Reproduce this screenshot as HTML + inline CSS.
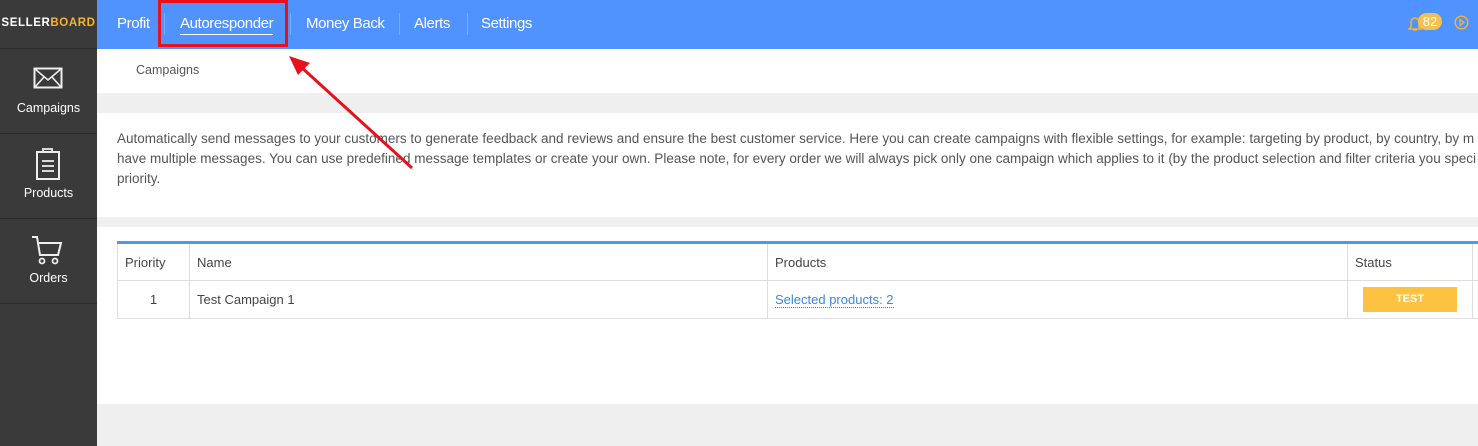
<!DOCTYPE html>
<html><head><style>
*{margin:0;padding:0;box-sizing:border-box}
body{width:1478px;height:446px;overflow:hidden;position:relative;background:#efefef;font-family:"Liberation Sans",sans-serif;}
.side{position:absolute;left:0;top:0;width:97px;height:446px;background:#3a3a3a;}
.logo{height:49px;line-height:47px;font-weight:bold;font-size:11.5px;color:#fff;text-align:center;letter-spacing:0.6px;border-bottom:1px solid #2c2c2c}
.logo b{color:#f5b52c}
.item{height:85px;border-bottom:1px solid #2c2c2c;color:#fff;font-size:12.5px;text-align:center;position:relative}
.item span{position:absolute;left:0;right:0;bottom:18px}
.item svg{position:absolute;left:33px;top:18px}
.top{position:absolute;left:97px;top:0;right:0;height:49px;background:#5093fe;color:#fff;font-size:15px}
.top a{position:absolute;top:15px;letter-spacing:-0.4px}
.sep{position:absolute;top:13px;width:1px;height:22px;background:#76abff}
.w{position:absolute;left:97px;right:0;background:#fff}
p{font-size:13.5px;color:#555;line-height:20px}
table{position:absolute;left:117px;top:241px;border-collapse:collapse;border-top:3px solid #5093fe;font-size:13px;color:#444;table-layout:fixed;width:1380px}
td{border:1px solid #ddd;padding:0 7px;height:38px}
</style></head><body>
<div class="side">
<div class="logo">SELLER<b>BOARD</b></div>
<div class="item"><svg width="30" height="22" viewBox="0 0 30 22"><rect x="1.5" y="1.5" width="27" height="19" fill="none" stroke="#eee" stroke-width="2"/><path d="M2 2L15 13L28 2M2 20L11 10M28 20L19 10" fill="none" stroke="#eee" stroke-width="1.6"/></svg><span>Campaigns</span></div>
<div class="item"><svg width="30" height="34" viewBox="0 0 30 34" style="left:35px;top:14px"><rect x="2" y="4" width="22" height="27" fill="none" stroke="#eee" stroke-width="2"/><path d="M8 4V1H17V4M7 13H19M7 18H19M7 23H19" fill="none" stroke="#eee" stroke-width="1.8"/></svg><span>Products</span></div>
<div class="item"><svg width="34" height="32" viewBox="0 0 34 32" style="left:31px;top:16px"><path d="M1 2H6L9 20H27L30 8H8" fill="none" stroke="#eee" stroke-width="2"/><circle cx="11" cy="26" r="2.5" fill="none" stroke="#eee" stroke-width="1.8"/><circle cx="24" cy="26" r="2.5" fill="none" stroke="#eee" stroke-width="1.8"/></svg><span>Orders</span></div>
</div>
<div class="top">
<a style="left:20px">Profit</a><div class="sep" style="left:67px"></div>
<a style="left:83px;border-bottom:1px solid #fff;padding-bottom:2px">Autoresponder</a><div class="sep" style="left:193px"></div>
<a style="left:209px">Money Back</a><div class="sep" style="left:302px"></div>
<a style="left:317px">Alerts</a><div class="sep" style="left:370px"></div>
<a style="left:384px">Settings</a>
<svg style="position:absolute;left:1311px;top:14px" width="14" height="18" viewBox="0 0 14 18"><path d="M3 13V8a4 4 0 0 1 8 0v5l2 2H1zM5 16h4" fill="none" stroke="#f5b52c" stroke-width="1.5"/></svg>
<div style="position:absolute;left:1321px;top:13px;width:24px;height:17px;border-radius:9px;background:#f5c14a;color:#fff;font-size:13px;text-align:center;line-height:17px">82</div>
<svg style="position:absolute;left:1357px;top:15px" width="15" height="15" viewBox="0 0 15 15"><circle cx="7.5" cy="7.5" r="6.3" fill="none" stroke="#f5b52c" stroke-width="1.4"/><path d="M6 4.5L10 7.5L6 10.5z" fill="none" stroke="#f5b52c" stroke-width="1.2"/></svg>
</div>
<div class="w" style="top:49px;height:44px"><div style="position:absolute;left:39px;top:14px;font-size:12.5px;color:#555">Campaigns</div></div>
<div class="w" style="top:113px;height:104px"><p style="position:absolute;left:20px;top:16px;width:1400px;white-space:nowrap">Automatically send messages to your customers to generate feedback and reviews and ensure the best customer service. Here you can create campaigns with flexible settings, for example: targeting by product, by country, by m<br>have multiple messages. You can use predefined message templates or create your own. Please note, for every order we will always pick only one campaign which applies to it (by the product selection and filter criteria you speci<br>priority.</p></div>
<div class="w" style="top:227px;height:177px"></div>
<table>
<colgroup><col style="width:72px"><col style="width:578px"><col style="width:580px"><col style="width:125px"><col></colgroup>
<tr><td>Priority</td><td>Name</td><td>Products</td><td>Status</td><td></td></tr>
<tr><td style="text-align:center">1</td><td>Test Campaign 1</td><td><span style="color:#3b86e0;border-bottom:1px dotted #3b86e0">Selected products: 2</span></td><td style="padding:0 15px"><div style="background:#fdc241;color:#fff;font-weight:bold;font-size:11px;text-align:center;height:25px;line-height:25px;width:94px">TEST</div></td><td></td></tr>
</table>
<div style="position:absolute;left:158px;top:0;width:130px;height:47px;border:3px solid #e8101a"></div>
<svg style="position:absolute;left:0;top:0" width="1478" height="446"><line x1="412" y1="168" x2="300" y2="66" stroke="#e8101a" stroke-width="3"/><path d="M289 56L310 63L298 75z" fill="#e8101a"/></svg>
</body></html>
